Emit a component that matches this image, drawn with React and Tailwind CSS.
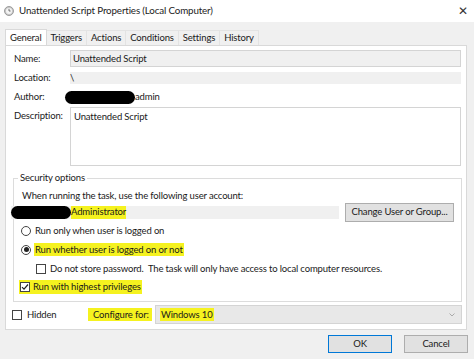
import React from "react";

const F = { fontFamily: 'Lato, "Noto Sans", sans-serif', letterSpacing: "-0.15px" };

function Blob({ w, h = 14 }) {
  return <span className="inline-block bg-black rounded-full shrink-0" style={{ width: w, height: h }} />;
}

function Checkbox({ checked }) {
  return (
    <span className="w-[10px] h-[10px] border border-[#444] bg-white flex items-center justify-center shrink-0">
      {checked && (
        <svg width="8" height="8" viewBox="0 0 8 8">
          <path d="M1 4.2 L3 6.2 L7 1.5" fill="none" stroke="#222" strokeWidth="1.2" />
        </svg>
      )}
    </span>
  );
}

function Radio({ checked }) {
  return (
    <span className="w-[10px] h-[10px] rounded-full border border-[#444] bg-white flex items-center justify-center shrink-0">
      {checked && <span className="w-[5px] h-[5px] rounded-full bg-[#222]" />}
    </span>
  );
}

export default function App() {
  return (
    <div className="w-[474px] h-[359px] bg-[#f0f0f0] text-[9.5px] text-[#1a1a1a] overflow-hidden leading-none whitespace-nowrap" style={F}>
      {/* title bar */}
      <div className="h-[22px] bg-white flex items-center pl-[4px] pr-[6px]">
        <svg width="10" height="10" viewBox="0 0 10 10" className="shrink-0">
          <circle cx="5" cy="5" r="4.5" fill="#c9c9c9" stroke="#8a8a8a" strokeWidth="0.8" />
          <circle cx="5" cy="5" r="3" fill="#f4f4f4" />
          <path d="M5 2.8 V5 H6.6" stroke="#555" strokeWidth="0.8" fill="none" />
        </svg>
        <span className="ml-[5px] text-[9.8px] text-[#222]">Unattended Script Properties (Local Computer)</span>
        <span className="ml-auto text-[12px] text-[#333] font-light">✕</span>
      </div>
      {/* tabs */}
      <div className="flex items-end pl-[5px] h-[23px]">
        <div className="h-[17px] px-[4px] bg-white border border-b-0 border-[#d9d9d9] flex items-center relative top-[1px]">General</div>
        {["Triggers", "Actions", "Conditions", "Settings", "History"].map((t) => (
          <div key={t} className="h-[15px] px-[4px] border border-b-0 border-l-0 border-[#e3e3e3] bg-[#f0f0f0] flex items-center">{t}</div>
        ))}
      </div>
      {/* panel */}
      <div className="ml-[5px] w-[462px] h-[285px] bg-white border border-[#d9d9d9] relative">
        <div className="pl-[8px] pt-[4px]">
          <div className="flex items-center h-[17px]">
            <span className="w-[56px]">Name:</span>
            <div className="w-[391px] h-[17px] bg-[#f0f0f0] border border-[#d4d4d4] flex items-center pl-[2px]">Unattended Script</div>
          </div>
          <div className="flex items-center h-[12px] mt-[5px]">
            <span className="w-[56px]">Location:</span>
            <div className="w-[391px] h-[12px] bg-[#f0f0f0] flex items-center">\</div>
          </div>
          <div className="flex items-center h-[14px] mt-[6px]">
            <span className="w-[51px]">Author:</span>
            <Blob w={70} h={13} />
            <span>admin</span>
          </div>
          <div className="flex mt-[3px]">
            <span className="w-[56px] pt-[4px]">Description:</span>
            <div className="w-[391px] h-[59px] bg-white border border-[#d4d4d4] pl-[3px] pt-[4px]">Unattended Script</div>
          </div>
        </div>
        {/* Security options group */}
        <div className="ml-[7px] mt-[12px] w-[449px] h-[124px] border border-[#dcdcdc] relative">
          <span className="absolute -top-[6px] left-[4px] bg-white px-[2px]">Security options</span>
          <div className="pl-[8px] pt-[12px]">When running the task, use the following user account:</div>
          <div className="flex items-center mt-[2px]">
            <div className="w-[328px] h-[13px] bg-[#f0f0f0] flex items-center -ml-[3px]">
              <Blob w={60} h={13} />
              <span className="bg-[#f5f21f] h-[13px] flex items-center">Administrator</span>
            </div>
            <div className="ml-[6px] w-[109px] h-[19px] bg-[#e1e1e1] border border-[#adadad] flex items-center justify-center">Change User or Group...</div>
          </div>
          <div className="flex items-center gap-[4px] pl-[7px] mt-[3px] h-[12px]">
            <Radio />
            <span>Run only when user is logged on</span>
          </div>
          <div className="flex items-center gap-[3px] pl-[7px] mt-[7px] h-[12px]">
            <Radio checked />
            <span className="bg-[#f5f21f] h-[13px] flex items-center px-[1px]">Run whether user is logged on or not</span>
          </div>
          <div className="flex items-center gap-[4px] pl-[22px] mt-[7px] h-[12px]">
            <Checkbox />
            <span>Do not store password.&nbsp; The task will only have access to local computer resources.</span>
          </div>
          <div className="flex items-center gap-[3px] pl-[5px] mt-[6px] h-[12px]">
            <span className="bg-[#f5f21f] flex items-center h-[14px] pl-[1px] gap-[3px] pr-[1px]">
              <Checkbox checked />
              <span>Run with highest privileges</span>
            </span>
          </div>
        </div>
        {/* bottom row */}
        <div className="flex items-center pl-[6px] mt-[3px] h-[19px]">
          <Checkbox />
          <span className="ml-[5px] w-[61px]">Hidden</span>
          <span className="bg-[#f5f21f] h-[13px] flex items-center px-[5px] w-[64px]">Configure for:</span>
          <div className="ml-[3px] w-[307px] h-[19px] bg-[#e8e8e8] border border-[#d4d4d4] flex items-center pl-[4px] pr-[6px]">
            <span className="bg-[#f5f21f] h-[13px] flex items-center px-[1px]">Windows 10</span>
            <svg width="6" height="4" viewBox="0 0 6 4" className="ml-auto">
              <path d="M0.5 0.5 L3 3 L5.5 0.5" fill="none" stroke="#999" strokeWidth="0.8" />
            </svg>
          </div>
        </div>
      </div>
      {/* buttons */}
      <div className="flex justify-end pr-[6px] pt-[5px] gap-[12px]">
        <div className="w-[64px] h-[18px] bg-[#e1e1e1] border border-[#0078d7] flex items-center justify-center">OK</div>
        <div className="w-[64px] h-[18px] bg-[#e1e1e1] border border-[#adadad] flex items-center justify-center">Cancel</div>
      </div>
    </div>
  );
}
